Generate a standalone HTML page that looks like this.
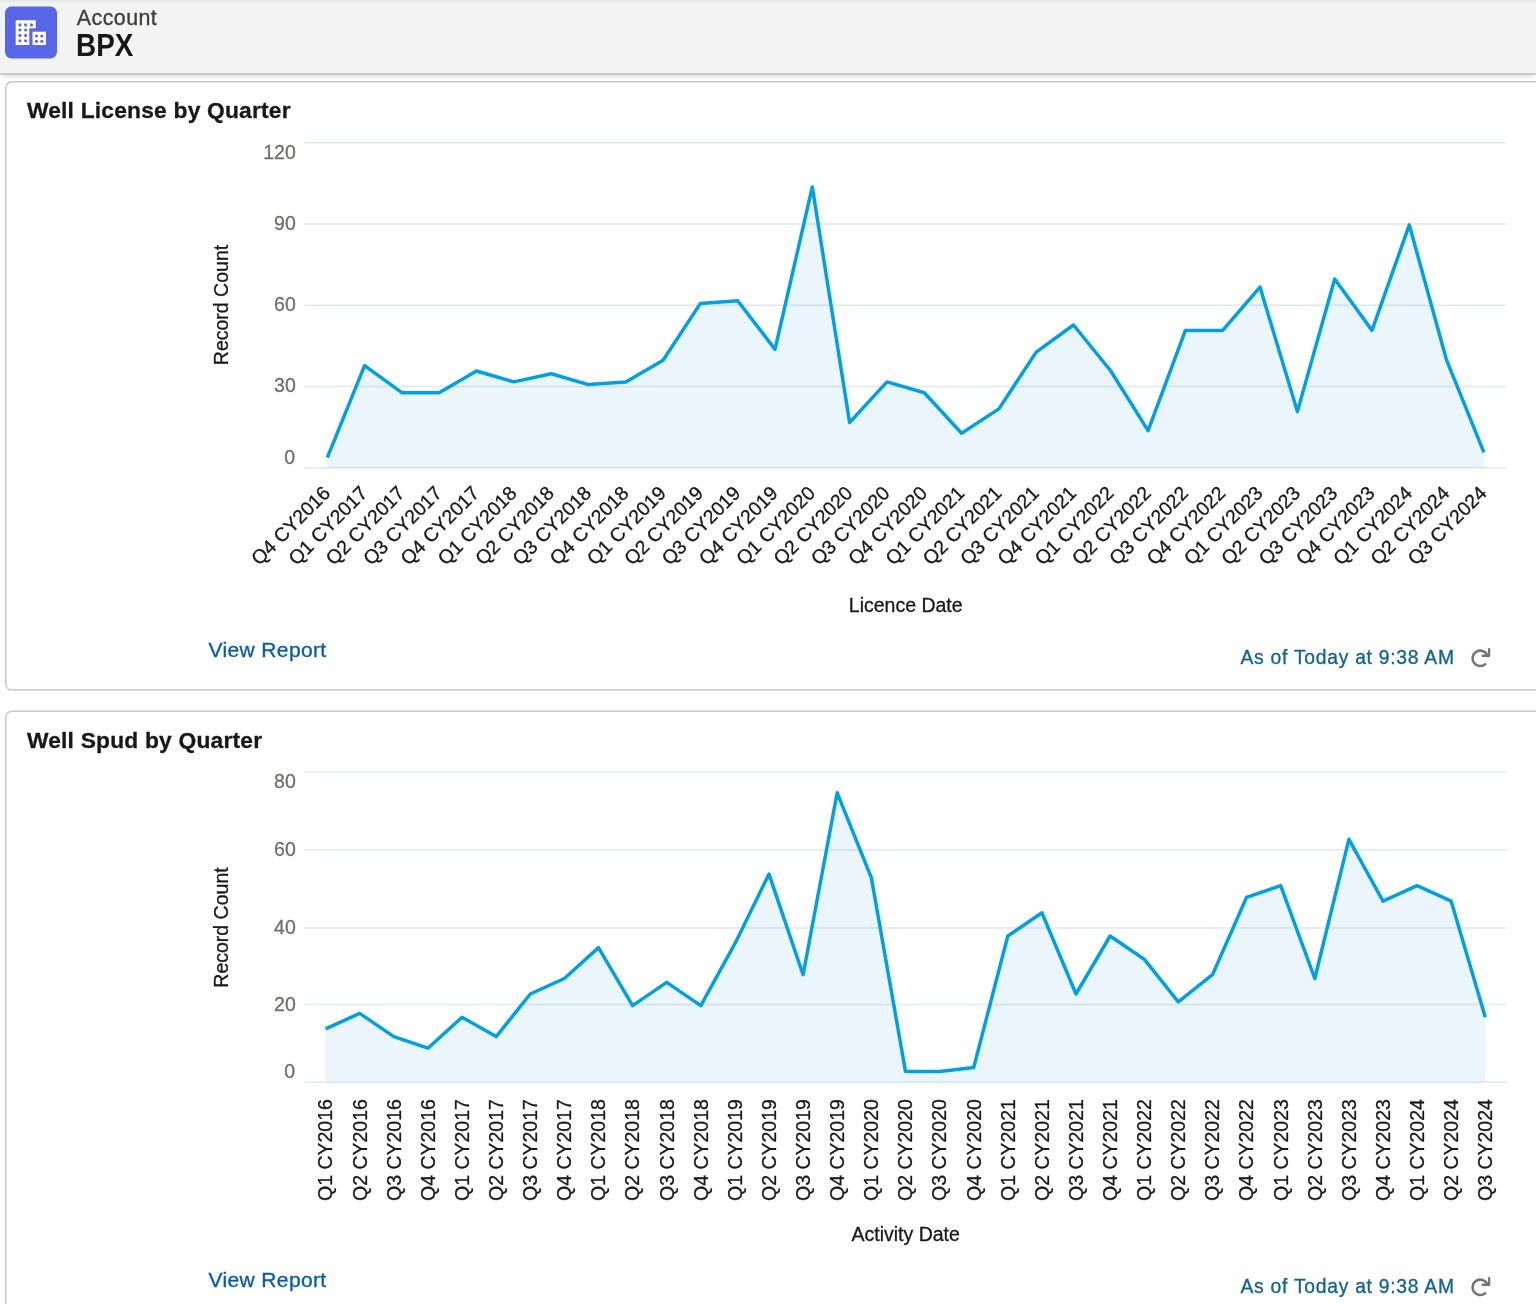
<!DOCTYPE html>
<html lang="en"><head><meta charset="utf-8"><title>BPX | Account</title>
<style>
html,body{margin:0;padding:0}
body{width:1536px;height:1304px;overflow:hidden;background:#fff;position:relative;font-family:"Liberation Sans", sans-serif;}
.t{position:absolute;white-space:nowrap;line-height:1;}
.hdr{position:absolute;left:0;top:0;width:1536px;height:73px;background:linear-gradient(#e6e6e6,#f3f3f3 4px);border-bottom:1px solid #c9c9c9;box-shadow:0 1px 0 rgba(0,0,0,.1),0 2px 5px rgba(0,0,0,.16);box-sizing:content-box}
.ico{position:absolute;left:0;top:0;width:64px;height:64px}
.ico svg{position:absolute;left:0;top:0}
.card{position:absolute;left:5px;width:1560px;height:609.7px;box-sizing:border-box;border:0;border-radius:6.5px;background:#fff;overflow:visible}
.chart{position:absolute;left:-5px;overflow:visible;font-family:"Liberation Sans", sans-serif}
.chart text{stroke-width:.3px;paint-order:stroke fill}
.chart text.ax{stroke:#181818}
.chart text.tk{stroke:#706e6b}
.ent,.link,.asof{-webkit-text-stroke:.35px currentColor}
.title{-webkit-text-stroke:.3px currentColor}
.rf{position:absolute}
.page{position:absolute;left:0;top:0;width:1536px;height:1304px;will-change:transform}
.name{transform:scaleX(.888);transform-origin:0 0}
</style></head>
<body>
<div class="page">
<header class="hdr"><div class="ico"><svg width="64" height="64" viewBox="-5 -6.5 64 64"><rect x="0" y="0" width="52" height="52" rx="6.5" fill="#5867e8"/><path fill="#fff" d="M10.7 13.8h20.1v7.9h-6.5v16.8H10.7z"/><path fill="#fff" d="M27.5 25.2h13.4v13.3H27.5z"/>
<g fill="#5867e8"><circle cx="14.9" cy="18.4" r="1.55"/><circle cx="20.6" cy="18.4" r="1.55"/><circle cx="26.5" cy="18.4" r="1.55"/>
<circle cx="14.9" cy="23.5" r="1.55"/><circle cx="20.6" cy="23.5" r="1.55"/>
<circle cx="14.9" cy="28.9" r="1.55"/><circle cx="20.6" cy="28.9" r="1.55"/>
<circle cx="14.9" cy="34.2" r="1.55"/><circle cx="20.6" cy="34.2" r="1.55"/>
<circle cx="31.5" cy="29.5" r="1.55"/><circle cx="36.8" cy="29.5" r="1.55"/>
<circle cx="31.5" cy="34.85" r="1.55"/><circle cx="36.8" cy="34.85" r="1.55"/></g></svg></div></header>
<div class="t ent" style="left:76.80px;top:8.28px;font-size:21.4px;color:#3e3e3c;letter-spacing:0.45px;">Account</div>
<div class="t name" style="left:75.90px;top:29.62px;font-size:31.4px;color:#181818;font-weight:bold;">BPX</div>
<section class="card" style="top:81px">
<svg class="chart" style="top:-81px" width="1536" height="1304" viewBox="0 0 1536 1304">
<rect x="5.75" y="81.85" width="1560" height="608.2" rx="6" fill="none" stroke="#c9c9c9" stroke-width="1.5"/>
<line x1="304.5" x2="1506.7" y1="142.75" y2="142.75" stroke="#e0e7ef" stroke-width="1.5"/>
<line x1="304.5" x2="1506.7" y1="223.95" y2="223.95" stroke="#e0e7ef" stroke-width="1.5"/>
<line x1="304.5" x2="1506.7" y1="305.15" y2="305.15" stroke="#e0e7ef" stroke-width="1.5"/>
<line x1="304.5" x2="1506.7" y1="386.4" y2="386.4" stroke="#e0e7ef" stroke-width="1.5"/>
<line x1="304.5" x2="1506.7" y1="467.7" y2="467.7" stroke="#e0e7ef" stroke-width="1.5"/>
<path d="M327.3 467.7 L327.3 457.7 L364.6 365.6 L401.9 392.7 L439.2 392.7 L476.5 371.0 L513.9 381.9 L551.2 373.7 L588.5 384.6 L625.8 381.9 L663.1 360.2 L700.4 303.4 L737.7 300.7 L775.0 349.4 L812.3 187.0 L849.6 422.5 L887.0 381.9 L924.3 392.7 L961.6 433.3 L998.9 408.9 L1036.2 352.1 L1073.5 325.0 L1110.8 371.0 L1148.1 430.6 L1185.4 330.4 L1222.7 330.4 L1260.0 287.1 L1297.4 411.6 L1334.7 279.0 L1372.0 330.4 L1409.3 224.9 L1446.6 360.2 L1483.9 452.3 L1483.9 467.7 Z" fill="#1490dc" fill-opacity="0.088"/>
<path d="M327.3 457.7 L364.6 365.6 L401.9 392.7 L439.2 392.7 L476.5 371.0 L513.9 381.9 L551.2 373.7 L588.5 384.6 L625.8 381.9 L663.1 360.2 L700.4 303.4 L737.7 300.7 L775.0 349.4 L812.3 187.0 L849.6 422.5 L887.0 381.9 L924.3 392.7 L961.6 433.3 L998.9 408.9 L1036.2 352.1 L1073.5 325.0 L1110.8 371.0 L1148.1 430.6 L1185.4 330.4 L1222.7 330.4 L1260.0 287.1 L1297.4 411.6 L1334.7 279.0 L1372.0 330.4 L1409.3 224.9 L1446.6 360.2 L1483.9 452.3" fill="none" stroke="#02a0e0" stroke-width="3.5" stroke-linejoin="round" stroke-linecap="butt"/>
<text x="295.8" y="158.7" text-anchor="end" class="tk" fill="#706e6b" font-size="19.5">120</text>
<text x="295.8" y="229.8" text-anchor="end" class="tk" fill="#706e6b" font-size="19.5">90</text>
<text x="295.8" y="311.0" text-anchor="end" class="tk" fill="#706e6b" font-size="19.5">60</text>
<text x="295.8" y="392.3" text-anchor="end" class="tk" fill="#706e6b" font-size="19.5">30</text>
<text x="295.0" y="463.8" text-anchor="end" class="tk" fill="#706e6b" font-size="19.5">0</text>
<text transform="translate(228 305) rotate(-90)" text-anchor="middle" class="ax" fill="#181818" font-size="19.5">Record Count</text>
<text transform="translate(331.3 494.3) rotate(-45)" text-anchor="end" class="ax" fill="#181818" font-size="19.5">Q4 CY2016</text>
<text transform="translate(368.6 494.3) rotate(-45)" text-anchor="end" class="ax" fill="#181818" font-size="19.5">Q1 CY2017</text>
<text transform="translate(405.9 494.3) rotate(-45)" text-anchor="end" class="ax" fill="#181818" font-size="19.5">Q2 CY2017</text>
<text transform="translate(443.2 494.3) rotate(-45)" text-anchor="end" class="ax" fill="#181818" font-size="19.5">Q3 CY2017</text>
<text transform="translate(480.5 494.3) rotate(-45)" text-anchor="end" class="ax" fill="#181818" font-size="19.5">Q4 CY2017</text>
<text transform="translate(517.9 494.3) rotate(-45)" text-anchor="end" class="ax" fill="#181818" font-size="19.5">Q1 CY2018</text>
<text transform="translate(555.2 494.3) rotate(-45)" text-anchor="end" class="ax" fill="#181818" font-size="19.5">Q2 CY2018</text>
<text transform="translate(592.5 494.3) rotate(-45)" text-anchor="end" class="ax" fill="#181818" font-size="19.5">Q3 CY2018</text>
<text transform="translate(629.8 494.3) rotate(-45)" text-anchor="end" class="ax" fill="#181818" font-size="19.5">Q4 CY2018</text>
<text transform="translate(667.1 494.3) rotate(-45)" text-anchor="end" class="ax" fill="#181818" font-size="19.5">Q1 CY2019</text>
<text transform="translate(704.4 494.3) rotate(-45)" text-anchor="end" class="ax" fill="#181818" font-size="19.5">Q2 CY2019</text>
<text transform="translate(741.7 494.3) rotate(-45)" text-anchor="end" class="ax" fill="#181818" font-size="19.5">Q3 CY2019</text>
<text transform="translate(779.0 494.3) rotate(-45)" text-anchor="end" class="ax" fill="#181818" font-size="19.5">Q4 CY2019</text>
<text transform="translate(816.3 494.3) rotate(-45)" text-anchor="end" class="ax" fill="#181818" font-size="19.5">Q1 CY2020</text>
<text transform="translate(853.6 494.3) rotate(-45)" text-anchor="end" class="ax" fill="#181818" font-size="19.5">Q2 CY2020</text>
<text transform="translate(891.0 494.3) rotate(-45)" text-anchor="end" class="ax" fill="#181818" font-size="19.5">Q3 CY2020</text>
<text transform="translate(928.3 494.3) rotate(-45)" text-anchor="end" class="ax" fill="#181818" font-size="19.5">Q4 CY2020</text>
<text transform="translate(965.6 494.3) rotate(-45)" text-anchor="end" class="ax" fill="#181818" font-size="19.5">Q1 CY2021</text>
<text transform="translate(1002.9 494.3) rotate(-45)" text-anchor="end" class="ax" fill="#181818" font-size="19.5">Q2 CY2021</text>
<text transform="translate(1040.2 494.3) rotate(-45)" text-anchor="end" class="ax" fill="#181818" font-size="19.5">Q3 CY2021</text>
<text transform="translate(1077.5 494.3) rotate(-45)" text-anchor="end" class="ax" fill="#181818" font-size="19.5">Q4 CY2021</text>
<text transform="translate(1114.8 494.3) rotate(-45)" text-anchor="end" class="ax" fill="#181818" font-size="19.5">Q1 CY2022</text>
<text transform="translate(1152.1 494.3) rotate(-45)" text-anchor="end" class="ax" fill="#181818" font-size="19.5">Q2 CY2022</text>
<text transform="translate(1189.4 494.3) rotate(-45)" text-anchor="end" class="ax" fill="#181818" font-size="19.5">Q3 CY2022</text>
<text transform="translate(1226.7 494.3) rotate(-45)" text-anchor="end" class="ax" fill="#181818" font-size="19.5">Q4 CY2022</text>
<text transform="translate(1264.0 494.3) rotate(-45)" text-anchor="end" class="ax" fill="#181818" font-size="19.5">Q1 CY2023</text>
<text transform="translate(1301.4 494.3) rotate(-45)" text-anchor="end" class="ax" fill="#181818" font-size="19.5">Q2 CY2023</text>
<text transform="translate(1338.7 494.3) rotate(-45)" text-anchor="end" class="ax" fill="#181818" font-size="19.5">Q3 CY2023</text>
<text transform="translate(1376.0 494.3) rotate(-45)" text-anchor="end" class="ax" fill="#181818" font-size="19.5">Q4 CY2023</text>
<text transform="translate(1413.3 494.3) rotate(-45)" text-anchor="end" class="ax" fill="#181818" font-size="19.5">Q1 CY2024</text>
<text transform="translate(1450.6 494.3) rotate(-45)" text-anchor="end" class="ax" fill="#181818" font-size="19.5">Q2 CY2024</text>
<text transform="translate(1487.9 494.3) rotate(-45)" text-anchor="end" class="ax" fill="#181818" font-size="19.5">Q3 CY2024</text>
<text x="905.7" y="611.5" text-anchor="middle" class="ax" fill="#181818" font-size="19.5">Licence Date</text>
</svg>
</section>
<div class="t title" style="left:26.90px;top:99.40px;font-size:22.8px;color:#181818;font-weight:bold;letter-spacing:0.2px;">Well License by Quarter</div>
<div class="t link" style="left:208.50px;top:639.22px;font-size:21px;color:#0b5cab;letter-spacing:0.37px;">View Report</div>
<div class="t asof" style="left:1240.50px;top:647.66px;font-size:19.3px;color:#16648e;letter-spacing:0.74px;">As of Today at 9:38 AM</div>
<svg class="rf" style="left:1469px;top:646px" width="24" height="24" viewBox="0 0 24 24"><path d="M16.2 18.25A7.7 7.7 0 1 1 18.23 9.1" fill="none" stroke="#757575" stroke-width="2.6" stroke-linecap="round"/><path d="M20.1 6.2V9.6H16.6z" fill="#757575"/><path d="M20.1 3.3V9.7H13.7" fill="none" stroke="#757575" stroke-width="2.4" stroke-linejoin="round" stroke-linecap="round"/></svg>

<section class="card" style="top:710px">
<svg class="chart" style="top:-710px" width="1536" height="1304" viewBox="0 0 1536 1304">
<rect x="5.75" y="711.25" width="1560" height="608.2" rx="6" fill="none" stroke="#c9c9c9" stroke-width="1.5"/>
<line x1="304.5" x2="1506.7" y1="771.9" y2="771.9" stroke="#e0e7ef" stroke-width="1.5"/>
<line x1="304.5" x2="1506.7" y1="849.9" y2="849.9" stroke="#e0e7ef" stroke-width="1.5"/>
<line x1="304.5" x2="1506.7" y1="927.9" y2="927.9" stroke="#e0e7ef" stroke-width="1.5"/>
<line x1="304.5" x2="1506.7" y1="1004.6" y2="1004.6" stroke="#e0e7ef" stroke-width="1.5"/>
<line x1="304.5" x2="1506.7" y1="1082.3" y2="1082.3" stroke="#e0e7ef" stroke-width="1.5"/>
<path d="M325.6 1082.3 L325.6 1028.8 L359.7 1013.4 L393.8 1036.6 L427.9 1048.2 L462.0 1017.2 L496.2 1036.6 L530.3 994.0 L564.4 978.5 L598.5 947.6 L632.6 1005.6 L666.7 982.4 L700.8 1005.6 L734.9 943.7 L769.0 874.1 L803.1 974.7 L837.2 792.8 L871.4 877.9 L905.5 1071.4 L939.6 1071.4 L973.7 1067.5 L1007.8 936.0 L1041.9 912.8 L1076.0 994.0 L1110.1 936.0 L1144.2 959.2 L1178.3 1001.8 L1212.5 974.7 L1246.6 897.3 L1280.7 885.7 L1314.8 978.5 L1348.9 839.3 L1383.0 901.2 L1417.1 885.7 L1451.2 901.2 L1485.3 1017.2 L1485.3 1082.3 Z" fill="#1490dc" fill-opacity="0.088"/>
<path d="M325.6 1028.8 L359.7 1013.4 L393.8 1036.6 L427.9 1048.2 L462.0 1017.2 L496.2 1036.6 L530.3 994.0 L564.4 978.5 L598.5 947.6 L632.6 1005.6 L666.7 982.4 L700.8 1005.6 L734.9 943.7 L769.0 874.1 L803.1 974.7 L837.2 792.8 L871.4 877.9 L905.5 1071.4 L939.6 1071.4 L973.7 1067.5 L1007.8 936.0 L1041.9 912.8 L1076.0 994.0 L1110.1 936.0 L1144.2 959.2 L1178.3 1001.8 L1212.5 974.7 L1246.6 897.3 L1280.7 885.7 L1314.8 978.5 L1348.9 839.3 L1383.0 901.2 L1417.1 885.7 L1451.2 901.2 L1485.3 1017.2" fill="none" stroke="#02a0e0" stroke-width="3.5" stroke-linejoin="round" stroke-linecap="butt"/>
<text x="295.8" y="787.8" text-anchor="end" class="tk" fill="#706e6b" font-size="19.5">80</text>
<text x="295.8" y="855.8" text-anchor="end" class="tk" fill="#706e6b" font-size="19.5">60</text>
<text x="295.8" y="934.1" text-anchor="end" class="tk" fill="#706e6b" font-size="19.5">40</text>
<text x="295.8" y="1011.2" text-anchor="end" class="tk" fill="#706e6b" font-size="19.5">20</text>
<text x="295.0" y="1078.3" text-anchor="end" class="tk" fill="#706e6b" font-size="19.5">0</text>
<text transform="translate(228 927.5) rotate(-90)" text-anchor="middle" class="ax" fill="#181818" font-size="19.5">Record Count</text>
<text transform="translate(332.4 1099.1) rotate(-90)" text-anchor="end" class="ax" fill="#181818" font-size="19.5">Q1 CY2016</text>
<text transform="translate(366.5 1099.1) rotate(-90)" text-anchor="end" class="ax" fill="#181818" font-size="19.5">Q2 CY2016</text>
<text transform="translate(400.6 1099.1) rotate(-90)" text-anchor="end" class="ax" fill="#181818" font-size="19.5">Q3 CY2016</text>
<text transform="translate(434.7 1099.1) rotate(-90)" text-anchor="end" class="ax" fill="#181818" font-size="19.5">Q4 CY2016</text>
<text transform="translate(468.8 1099.1) rotate(-90)" text-anchor="end" class="ax" fill="#181818" font-size="19.5">Q1 CY2017</text>
<text transform="translate(503.0 1099.1) rotate(-90)" text-anchor="end" class="ax" fill="#181818" font-size="19.5">Q2 CY2017</text>
<text transform="translate(537.1 1099.1) rotate(-90)" text-anchor="end" class="ax" fill="#181818" font-size="19.5">Q3 CY2017</text>
<text transform="translate(571.2 1099.1) rotate(-90)" text-anchor="end" class="ax" fill="#181818" font-size="19.5">Q4 CY2017</text>
<text transform="translate(605.3 1099.1) rotate(-90)" text-anchor="end" class="ax" fill="#181818" font-size="19.5">Q1 CY2018</text>
<text transform="translate(639.4 1099.1) rotate(-90)" text-anchor="end" class="ax" fill="#181818" font-size="19.5">Q2 CY2018</text>
<text transform="translate(673.5 1099.1) rotate(-90)" text-anchor="end" class="ax" fill="#181818" font-size="19.5">Q3 CY2018</text>
<text transform="translate(707.6 1099.1) rotate(-90)" text-anchor="end" class="ax" fill="#181818" font-size="19.5">Q4 CY2018</text>
<text transform="translate(741.7 1099.1) rotate(-90)" text-anchor="end" class="ax" fill="#181818" font-size="19.5">Q1 CY2019</text>
<text transform="translate(775.8 1099.1) rotate(-90)" text-anchor="end" class="ax" fill="#181818" font-size="19.5">Q2 CY2019</text>
<text transform="translate(809.9 1099.1) rotate(-90)" text-anchor="end" class="ax" fill="#181818" font-size="19.5">Q3 CY2019</text>
<text transform="translate(844.0 1099.1) rotate(-90)" text-anchor="end" class="ax" fill="#181818" font-size="19.5">Q4 CY2019</text>
<text transform="translate(878.2 1099.1) rotate(-90)" text-anchor="end" class="ax" fill="#181818" font-size="19.5">Q1 CY2020</text>
<text transform="translate(912.3 1099.1) rotate(-90)" text-anchor="end" class="ax" fill="#181818" font-size="19.5">Q2 CY2020</text>
<text transform="translate(946.4 1099.1) rotate(-90)" text-anchor="end" class="ax" fill="#181818" font-size="19.5">Q3 CY2020</text>
<text transform="translate(980.5 1099.1) rotate(-90)" text-anchor="end" class="ax" fill="#181818" font-size="19.5">Q4 CY2020</text>
<text transform="translate(1014.6 1099.1) rotate(-90)" text-anchor="end" class="ax" fill="#181818" font-size="19.5">Q1 CY2021</text>
<text transform="translate(1048.7 1099.1) rotate(-90)" text-anchor="end" class="ax" fill="#181818" font-size="19.5">Q2 CY2021</text>
<text transform="translate(1082.8 1099.1) rotate(-90)" text-anchor="end" class="ax" fill="#181818" font-size="19.5">Q3 CY2021</text>
<text transform="translate(1116.9 1099.1) rotate(-90)" text-anchor="end" class="ax" fill="#181818" font-size="19.5">Q4 CY2021</text>
<text transform="translate(1151.0 1099.1) rotate(-90)" text-anchor="end" class="ax" fill="#181818" font-size="19.5">Q1 CY2022</text>
<text transform="translate(1185.1 1099.1) rotate(-90)" text-anchor="end" class="ax" fill="#181818" font-size="19.5">Q2 CY2022</text>
<text transform="translate(1219.3 1099.1) rotate(-90)" text-anchor="end" class="ax" fill="#181818" font-size="19.5">Q3 CY2022</text>
<text transform="translate(1253.4 1099.1) rotate(-90)" text-anchor="end" class="ax" fill="#181818" font-size="19.5">Q4 CY2022</text>
<text transform="translate(1287.5 1099.1) rotate(-90)" text-anchor="end" class="ax" fill="#181818" font-size="19.5">Q1 CY2023</text>
<text transform="translate(1321.6 1099.1) rotate(-90)" text-anchor="end" class="ax" fill="#181818" font-size="19.5">Q2 CY2023</text>
<text transform="translate(1355.7 1099.1) rotate(-90)" text-anchor="end" class="ax" fill="#181818" font-size="19.5">Q3 CY2023</text>
<text transform="translate(1389.8 1099.1) rotate(-90)" text-anchor="end" class="ax" fill="#181818" font-size="19.5">Q4 CY2023</text>
<text transform="translate(1423.9 1099.1) rotate(-90)" text-anchor="end" class="ax" fill="#181818" font-size="19.5">Q1 CY2024</text>
<text transform="translate(1458.0 1099.1) rotate(-90)" text-anchor="end" class="ax" fill="#181818" font-size="19.5">Q2 CY2024</text>
<text transform="translate(1492.1 1099.1) rotate(-90)" text-anchor="end" class="ax" fill="#181818" font-size="19.5">Q3 CY2024</text>
<text x="905.7" y="1240.6" text-anchor="middle" class="ax" fill="#181818" font-size="19.5">Activity Date</text>
</svg>
</section>
<div class="t title" style="left:26.90px;top:728.80px;font-size:22.8px;color:#181818;font-weight:bold;letter-spacing:0.2px;">Well Spud by Quarter</div>
<div class="t link" style="left:208.50px;top:1268.62px;font-size:21px;color:#0b5cab;letter-spacing:0.37px;">View Report</div>
<div class="t asof" style="left:1240.50px;top:1277.06px;font-size:19.3px;color:#16648e;letter-spacing:0.74px;">As of Today at 9:38 AM</div>
<svg class="rf" style="left:1469px;top:1275.4px" width="24" height="24" viewBox="0 0 24 24"><path d="M16.2 18.25A7.7 7.7 0 1 1 18.23 9.1" fill="none" stroke="#757575" stroke-width="2.6" stroke-linecap="round"/><path d="M20.1 6.2V9.6H16.6z" fill="#757575"/><path d="M20.1 3.3V9.7H13.7" fill="none" stroke="#757575" stroke-width="2.4" stroke-linejoin="round" stroke-linecap="round"/></svg>

</div>
</body></html>
